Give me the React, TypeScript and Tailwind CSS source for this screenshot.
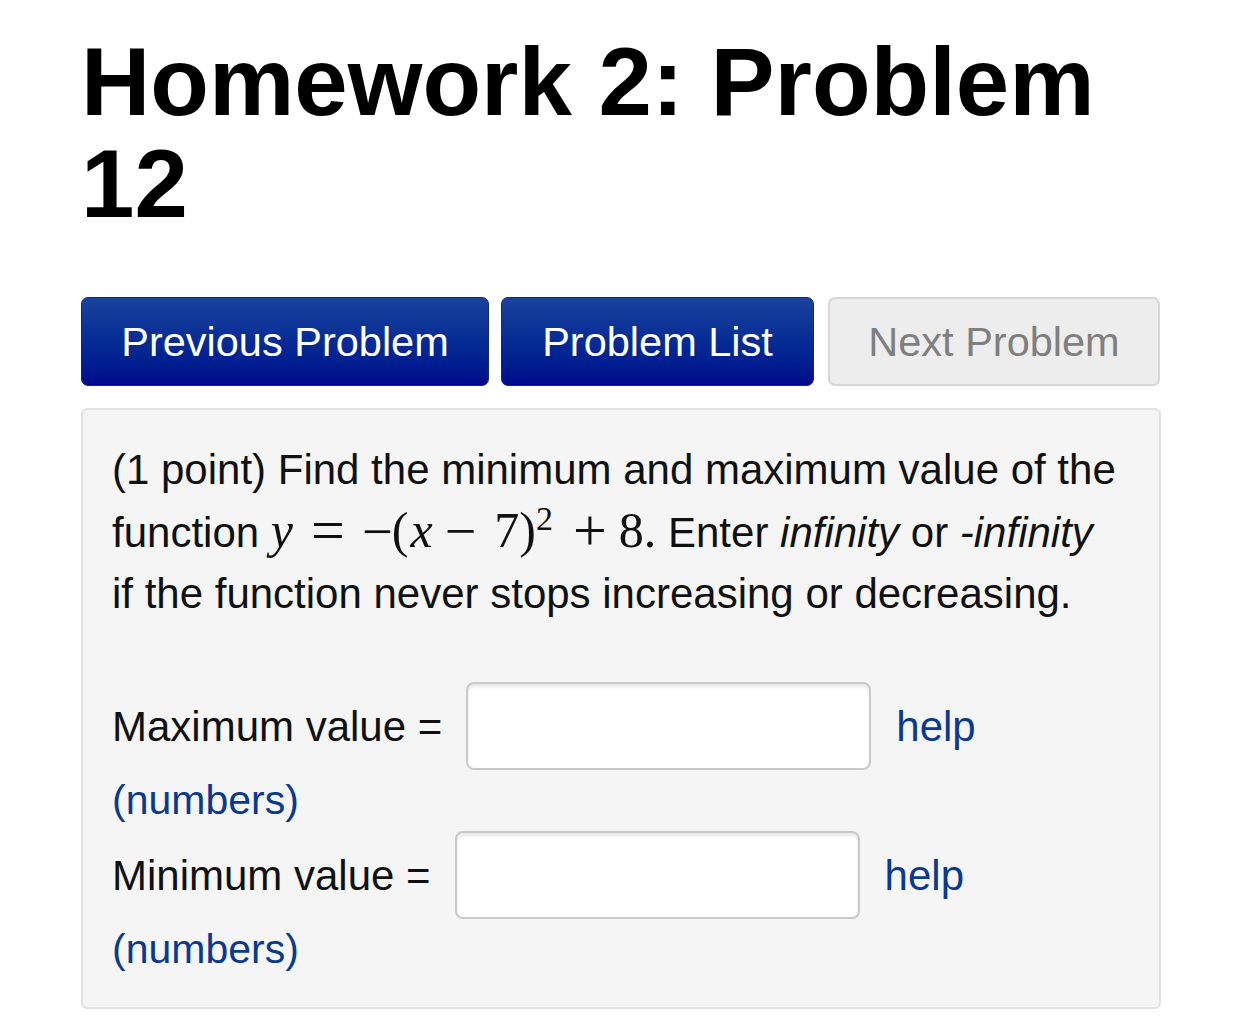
const sans = "font-['Liberation_Sans',Arial,sans-serif]";
const serif = "font-['Liberation_Serif','Times_New_Roman',serif]";

function AnswerRow({ label }: { label: string }) {
  return (
    <div className="flex h-[88px] items-center">
      <span>{label}</span>
      <input
        type="text"
        aria-label={label}
        className="ml-[24px] h-[88px] w-[405px] rounded-[8px] border-2 border-[#c9c9c9] bg-white shadow-[inset_0_3px_3px_rgba(0,0,0,0.09)] outline-none"
      />
      <a href="#" className="ml-[25px] text-[#0b3a8c]">
        help
      </a>
    </div>
  );
}

// operators are drawn a little larger than the letters, like the typeset TeX glyphs
function Op({ children, className }: { children: string; className: string }) {
  return (
    <span className={`inline-block translate-y-[3px] leading-[40px] ${className}`}>{children}</span>
  );
}

export default function App() {
  return (
    <div className={`min-h-[1022px] bg-white px-[81px] text-black ${sans}`}>
      <h1 className="pt-[31px] text-[96px] font-bold leading-[102px]">Homework 2: Problem 12</h1>

      <div className="mt-[62px] flex text-[41.5px] leading-none">
        <button className="flex h-[89px] w-[408px] items-center justify-center rounded-[7px] border border-[#0a2a80] bg-gradient-to-b from-[#1a429d] to-[#00088b] text-white">
          Previous Problem
        </button>
        <button className="ml-[12px] flex h-[89px] w-[313px] items-center justify-center rounded-[7px] border border-[#0a2a80] bg-gradient-to-b from-[#1a429d] to-[#00088b] text-white">
          Problem List
        </button>
        <button className="ml-[14px] flex h-[89px] w-[332px] items-center justify-center rounded-[7px] border-2 border-[#d6d6d6] bg-[#ededed] text-[#7f7f7f]">
          Next Problem
        </button>
      </div>

      <div className="mt-[22px] rounded-[6px] border-2 border-[#e2e2e2] bg-[#f5f5f5] pb-[27px] pl-[29px] pr-[10px] pt-[29px] text-[42px] leading-[61px] text-[#111]">
        <p className="whitespace-nowrap">
          (1 point) Find the minimum and maximum value of the
          <br />
          function{" "}
          <span className={`${serif} text-[50px]`}>
            <i>y</i>
            <Op className="ml-[18px] text-[60px]">=</Op>
            <Op className="ml-[17px] text-[55px]">−</Op>
            <span className="ml-[-1px]">(</span>
            <i className="ml-[2px]">x</i>
            <Op className="ml-[12px] text-[56px]">−</Op>
            <span className="ml-[18px]">7)</span>
            <sup className="text-[34px]">2</sup>
            <Op className="ml-[20px] text-[60px]">+</Op>
            <span className="ml-[12px]">8.</span>
          </span>{" "}
          Enter <i>infinity</i> or <i>-infinity</i>
          <br />
          if the function never stops increasing or decreasing.
        </p>

        <div className="mt-[58px]">
          <AnswerRow label="Maximum value =" />
          <a href="#" className="block text-[41px] text-[#0b3a8c]">
            (numbers)
          </a>
          <AnswerRow label="Minimum value =" />
          <a href="#" className="block text-[41px] text-[#0b3a8c]">
            (numbers)
          </a>
        </div>
      </div>
    </div>
  );
}
